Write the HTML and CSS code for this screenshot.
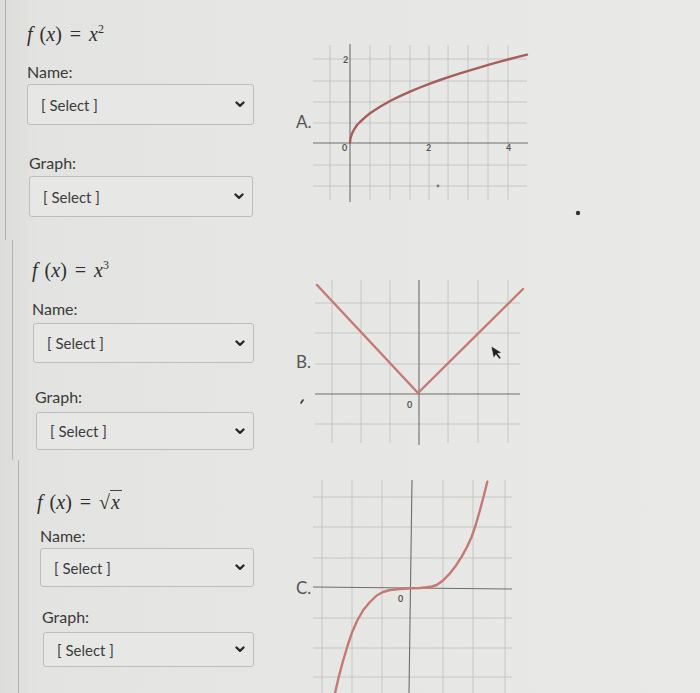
FILE: index.html
```html
<!DOCTYPE html>
<html>
<head>
<meta charset="utf-8">
<link rel="stylesheet" href="styles.css">
</head>
<body>
<div class="page">
  <div class="row row1">
    <div class="form">
      <div class="formula"><i class="fn">f</i> (<i>x</i>) <span class="eq">=</span> <i>x</i><sup>2</sup></div>
      <div class="label lname">Name:</div>
      <div class="select sname"><span>[ Select ]</span><svg class="chev" width="10" height="7" viewBox="0 0 10 7"><polyline points="1.5,1.5 5,4.8 8.5,1.5"/></svg></div>
      <div class="label lgraph">Graph:</div>
      <div class="select sgraph"><span>[ Select ]</span><svg class="chev" width="10" height="7" viewBox="0 0 10 7"><polyline points="1.5,1.5 5,4.8 8.5,1.5"/></svg></div>
    </div>
    <svg class="graph" width="420" height="240" viewBox="0 0 420 240">
      <g class="grid">
        <line x1="50" y1="45" x2="50" y2="200"/><line x1="90" y1="45" x2="90" y2="200"/>
        <line x1="110" y1="45" x2="110" y2="200"/><line x1="130" y1="45" x2="130" y2="200"/>
        <line x1="149" y1="45" x2="149" y2="200"/><line x1="168" y1="45" x2="168" y2="200"/>
        <line x1="188" y1="45" x2="188" y2="200"/><line x1="208" y1="45" x2="208" y2="200"/>
        <line x1="228" y1="45" x2="228" y2="200"/>
        <line x1="33" y1="59" x2="247" y2="59"/><line x1="33" y1="81" x2="247" y2="81"/>
        <line x1="33" y1="102" x2="247" y2="102"/><line x1="33" y1="123" x2="247" y2="123"/>
        <line x1="33" y1="165" x2="247" y2="165"/><line x1="33" y1="186" x2="247" y2="186"/>
      </g>
      <g class="axis">
        <line x1="70" y1="44" x2="70" y2="202"/>
        <line x1="33" y1="143" x2="248" y2="143"/>
      </g>
      <g class="tick">
        <text x="63" y="63">2</text>
        <text x="62" y="151">0</text>
        <text x="146" y="151">2</text>
        <text x="226" y="151">4</text>
      </g>
      <polyline class="curve dark" points="70,143 70.4,139 71,136.5 72,133.5 74,129.7 77,125 80,122 85,117.4 90,113.3 100,106.7 110,101 120,96.1 130,91.6 140,87.5 150,83.6 160,80 170,76.6 180,73.4 190,70.3 200,67.3 210,64.4 220,61.7 230,59 238,56.9 247,54.7"/>
      <text class="letter" x="16" y="128">A.</text>
      <circle cx="298" cy="213" r="2.2" fill="#333"/>
      <circle cx="158" cy="186" r="1.4" fill="#777"/>
    </svg>
  </div>

  <div class="row row2">
    <div class="form">
      <div class="formula"><i class="fn">f</i> (<i>x</i>) <span class="eq">=</span> <i>x</i><sup>3</sup></div>
      <div class="label lname">Name:</div>
      <div class="select sname"><span>[ Select ]</span><svg class="chev" width="10" height="7" viewBox="0 0 10 7"><polyline points="1.5,1.5 5,4.8 8.5,1.5"/></svg></div>
      <div class="label lgraph">Graph:</div>
      <div class="select sgraph"><span>[ Select ]</span><svg class="chev" width="10" height="7" viewBox="0 0 10 7"><polyline points="1.5,1.5 5,4.8 8.5,1.5"/></svg></div>
    </div>
    <svg class="graph" width="420" height="220" viewBox="0 0 420 220">
      <g class="grid">
        <line x1="52" y1="40" x2="52" y2="203"/><line x1="81" y1="40" x2="81" y2="203"/>
        <line x1="110" y1="40" x2="110" y2="203"/><line x1="168" y1="40" x2="168" y2="203"/>
        <line x1="198" y1="40" x2="198" y2="203"/><line x1="228" y1="40" x2="228" y2="203"/>
        <line x1="35" y1="63" x2="240" y2="63"/><line x1="35" y1="93" x2="240" y2="93"/>
        <line x1="35" y1="124" x2="240" y2="124"/><line x1="35" y1="184" x2="240" y2="184"/>
      </g>
      <g class="axis">
        <line x1="139" y1="40" x2="139" y2="205"/>
        <line x1="35" y1="154" x2="240" y2="154"/>
      </g>
      <g class="tick"><text x="127" y="168">0</text></g>
      <polyline class="curve" points="37,45 138,153 243,49"/>
      <text class="letter" x="16" y="128">B.</text>
      <path class="cursor" d="M0 0 L0 12.5 L3 9.6 L5.4 14.6 L7.4 13.7 L5 8.8 L9.2 8.8 Z" transform="translate(211 106) rotate(-12)"/>
      <path d="M21 163 L23 160" stroke="#333" stroke-width="1.6" stroke-linecap="round"/>
    </svg>
  </div>

  <div class="row row3">
    <div class="form">
      <div class="formula"><i class="fn">f</i> (<i>x</i>) <span class="eq">=</span> <span class="sqrt">√<span class="rad"><i>x</i></span></span></div>
      <div class="label lname">Name:</div>
      <div class="select sname"><span>[ Select ]</span><svg class="chev" width="10" height="7" viewBox="0 0 10 7"><polyline points="1.5,1.5 5,4.8 8.5,1.5"/></svg></div>
      <div class="label lgraph">Graph:</div>
      <div class="select sgraph"><span>[ Select ]</span><svg class="chev" width="10" height="7" viewBox="0 0 10 7"><polyline points="1.5,1.5 5,4.8 8.5,1.5"/></svg></div>
    </div>
    <svg class="graph" width="420" height="233" viewBox="0 0 420 233">
      <g class="grid">
        <line x1="42" y1="20" x2="42" y2="233"/><line x1="72" y1="20" x2="72" y2="233"/>
        <line x1="102" y1="20" x2="102" y2="233"/><line x1="163" y1="20" x2="163" y2="233"/>
        <line x1="193" y1="20" x2="193" y2="233"/><line x1="225" y1="20" x2="225" y2="233"/>
        <line x1="33" y1="37" x2="232" y2="37"/><line x1="33" y1="67" x2="232" y2="67"/>
        <line x1="33" y1="98" x2="232" y2="98"/><line x1="33" y1="158" x2="232" y2="158"/>
        <line x1="33" y1="188" x2="232" y2="188"/><line x1="33" y1="217" x2="232" y2="217"/>
      </g>
      <g class="axis">
        <line x1="132" y1="20" x2="129" y2="233"/>
        <line x1="33" y1="127" x2="232" y2="129"/>
      </g>
      <g class="tick"><text x="118" y="142">0</text></g>
      <polyline class="curve" points="55,233 59,216 63.3,200 67.5,186 71.7,173.3 77,161 83.3,150 90,142 96.7,135.5 103,132 110,130 120,129 131.7,128.3 140,128 146.7,127.3 152,126.5 156.7,125 163,120.5 170,113.3 176,105.5 181.7,96.7 187,87 191.7,76.7 196,64 200,50 204,35 207.3,21.7"/>
      <text class="letter" x="16" y="134">C.</text>
    </svg>
  </div>
</div>
</body>
</html>
```
FILE: styles.css
```css
html, body {
  margin: 0;
  padding: 0;
}
body {
  width: 700px;
  height: 693px;
  overflow: hidden;
  background: #e4e4e2;
  font-family: Lato, "Open Sans", sans-serif;
  color: #3d3d3d;
}
.page {
  display: flex;
  flex-direction: column;
  background: linear-gradient(90deg, #dcdcda 0px, #e3e3e1 40px, #e6e6e4 300px, #e9e9e7 700px);
}
.row {
  display: flex;
  align-items: flex-start;
}
.row1 { height: 240px; }
.row2 { height: 220px; }
.row3 { height: 233px; }

.form {
  box-sizing: border-box;
  height: 100%;
  border-left: 1px solid #b2b2b0;
  display: flex;
  flex-direction: column;
  align-items: flex-start;
}
.row1 .form { margin-left: 5px; width: 275px; }
.row2 .form { margin-left: 12px; width: 268px; }
.row3 .form { margin-left: 18px; width: 262px; }

.formula {
  font-family: "Liberation Serif", "DejaVu Serif", serif;
  font-size: 20px;
  line-height: 22px;
  color: #2e2e2e;
  white-space: nowrap;
}
.formula i { font-style: italic; }
.formula .fn { margin-right: 2px; }
.formula .eq { margin: 0 3px; }
.formula sup {
  font-size: 12px;
  vertical-align: 8px;
  line-height: 0;
}
.sqrt { white-space: nowrap; }
.rad {
  border-top: 1px solid #444;
  padding: 0 2px 0 1px;
}

.label {
  font-size: 16px;
  line-height: 20px;
  color: #3a3a3a;
}

.select {
  box-sizing: border-box;
  display: flex;
  align-items: center;
  justify-content: space-between;
  padding: 0 8px 0 13px;
  border: 1px solid #bdbdbb;
  border-radius: 3px;
  background: #e7e7e5;
  font-size: 15px;
  color: #3c3c3c;
}
.chev polyline {
  fill: none;
  stroke: #2b2b2b;
  stroke-width: 2.4;
  stroke-linecap: round;
  stroke-linejoin: round;
}

/* row 1 */
.row1 .formula { margin: 23px 0 0 21px; }
.row1 .lname { margin: 17px 0 0 21px; }
.row1 .sname { margin: 2px 0 0 21px; width: 227px; height: 41px; }
.row1 .lgraph { margin: 28px 0 0 23px; }
.row1 .sgraph { margin: 3px 0 0 23px; width: 224px; height: 41px; }

/* row 2 */
.row2 .formula { margin: 19px 0 0 19px; }
.row2 .lname { margin: 18px 0 0 19px; }
.row2 .sname { margin: 4px 0 0 20px; width: 221px; height: 40px; }
.row2 .lgraph { margin: 24px 0 0 22px; }
.row2 .sgraph { margin: 5px 0 0 23px; width: 218px; height: 38px; }

/* row 3 */
.row3 .formula { margin: 31px 0 0 18px; }
.row3 .lname { margin: 13px 0 0 21px; }
.row3 .sname { margin: 2px 0 0 21px; width: 214px; height: 39px; }
.row3 .lgraph { margin: 20px 0 0 23px; }
.row3 .sgraph { margin: 5px 0 0 24px; width: 211px; height: 35px; }

.graph { display: block; flex: none; }
.grid line { stroke: #c6c6c4; stroke-width: 1; }
.axis line { stroke: #6e6e6e; stroke-width: 1.1; }
.tick text {
  font-family: Lato, sans-serif;
  font-size: 9px;
  font-weight: bold;
  fill: #555;
}
.curve {
  fill: none;
  stroke: #c47a74;
  stroke-width: 2.4;
  stroke-linejoin: round;
  stroke-linecap: round;
}
.curve.dark { stroke: #a65e5c; }
.letter {
  font-family: Lato, sans-serif;
  font-size: 17px;
  fill: #555;
}
.cursor { fill: #222; stroke: #eee; stroke-width: 0.6; }
```
